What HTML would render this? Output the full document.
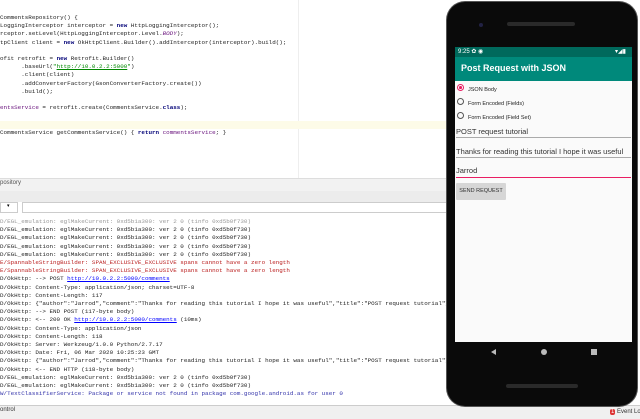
<html><head><style>
body{margin:0;width:640px;height:418px;background:#fff;position:relative;overflow:hidden;font-family:"Liberation Mono",monospace}
.c{position:absolute;font-size:5.9px;color:#222;white-space:pre;line-height:8.2px}
.s{font-family:"Liberation Sans",sans-serif}
</style></head><body>
<div style="position:absolute;left:298px;top:0;width:1px;height:178px;background:#eee"></div>
<div style="position:absolute;left:0;top:121px;width:447px;height:8px;background:#fdfbe8"></div>
<div class="c" style="left:0;top:14px">CommentsRepository() {
LoggingInterceptor interceptor = <b style="color:#007">new</b> HttpLoggingInterceptor();
rceptor.setLevel(HttpLoggingInterceptor.Level.<i style="color:#660e7a">BODY</i>);
tpClient client = <b style="color:#007">new</b> OkHttpClient.Builder().addInterceptor(interceptor).build();

ofit retrofit = <b style="color:#007">new</b> Retrofit.Builder()
      .baseUrl(<span style="color:#080">"<u>http://10.0.2.2:5000</u>"</span>)
      .client(client)
      .addConverterFactory(GsonConverterFactory.create())
      .build();

<span style="color:#660e7a">entsService</span> = retrofit.create(CommentsService.<b style="color:#007">class</b>);


CommentsService getCommentsService() { <b style="color:#007">return</b> <span style="color:#660e7a">commentsService</span>; }</div>
<div style="position:absolute;left:0;top:178px;width:447px;height:12px;background:#f2f2f2;border-top:1px solid #ddd;border-bottom:1px solid #ddd"></div>
<div class="s" style="position:absolute;left:0;top:180px;font-size:6px;color:#555">pository</div>
<div style="position:absolute;left:0;top:191px;width:447px;height:11px;background:#ececec"></div>
<div style="position:absolute;left:0;top:202px;width:16px;height:9px;border:1px solid #ccc;background:#fff;font-size:5px">&nbsp;&nbsp;▾</div>
<div style="position:absolute;left:22px;top:202px;width:425px;height:9px;border:1px solid #ccc;background:#fff"></div>
<div class="c" style="left:0;top:218px;line-height:8.2px"><span style="color:#999">D/EGL_emulation: eglMakeCurrent: 0xd5b1a300: ver 2 0 (tinfo 0xd5b0f730)</span>
D/EGL_emulation: eglMakeCurrent: 0xd5b1a300: ver 2 0 (tinfo 0xd5b0f730)
D/EGL_emulation: eglMakeCurrent: 0xd5b1a300: ver 2 0 (tinfo 0xd5b0f730)
D/EGL_emulation: eglMakeCurrent: 0xd5b1a300: ver 2 0 (tinfo 0xd5b0f730)
D/EGL_emulation: eglMakeCurrent: 0xd5b1a300: ver 2 0 (tinfo 0xd5b0f730)
<span style="color:#b22">E/SpannableStringBuilder: SPAN_EXCLUSIVE_EXCLUSIVE spans cannot have a zero length
E/SpannableStringBuilder: SPAN_EXCLUSIVE_EXCLUSIVE spans cannot have a zero length</span>
D/OkHttp: --&gt; POST <u style="color:#00f">http://10.0.2.2:5000/comments</u>
D/OkHttp: Content-Type: application/json; charset=UTF-8
D/OkHttp: Content-Length: 117
D/OkHttp: {"author":"Jarrod","comment":"Thanks for reading this tutorial I hope it was useful","title":"POST request tutorial"}
D/OkHttp: --&gt; END POST (117-byte body)
D/OkHttp: &lt;-- 200 OK <u style="color:#00f">http://10.0.2.2:5000/comments</u> (10ms)
D/OkHttp: Content-Type: application/json
D/OkHttp: Content-Length: 118
D/OkHttp: Server: Werkzeug/1.0.0 Python/2.7.17
D/OkHttp: Date: Fri, 06 Mar 2020 10:25:23 GMT
D/OkHttp: {"author":"Jarrod","comment":"Thanks for reading this tutorial I hope it was useful","title":"POST request tutorial"}
D/OkHttp: &lt;-- END HTTP (118-byte body)
D/EGL_emulation: eglMakeCurrent: 0xd5b1a300: ver 2 0 (tinfo 0xd5b0f730)
D/EGL_emulation: eglMakeCurrent: 0xd5b1a300: ver 2 0 (tinfo 0xd5b0f730)
<span style="color:#33a">W/TextClassifierService: Package or service not found in package com.google.android.as for user 0</span></div>
<div style="position:absolute;left:0;top:405px;width:640px;height:13px;background:#f0f0f0;border-top:1px solid #ccc"></div>
<div class="s" style="position:absolute;left:0;top:407px;font-size:6px;color:#333">ontrol</div>
<div class="s" style="position:absolute;left:610px;top:409px;font-size:6px;color:#333;white-space:nowrap"><span style="background:#d33;color:#fff;border-radius:2px;padding:0 1px">1</span> Event Log</div>
<!-- phone -->
<div style="position:absolute;left:447px;top:2px;width:190px;height:404px;background:#0a0a0a;border-radius:18px;box-shadow:0 0 0 1px #555"></div>
<div style="position:absolute;left:507px;top:22px;width:68px;height:4px;background:#2a2a2a;border-radius:2px"></div>
<div style="position:absolute;left:479px;top:23px;width:4px;height:4px;background:#224;border-radius:50%"></div>
<div style="position:absolute;left:506px;top:384px;width:72px;height:4px;background:#2a2a2a;border-radius:2px"></div>
<div style="position:absolute;left:455px;top:47px;width:177px;height:10px;background:#00695c"></div>
<div class="s" style="position:absolute;left:458px;top:48px;font-size:6px;color:#fff">9:25 ✿ ◉</div>
<div class="s" style="position:absolute;left:615px;top:48px;font-size:6px;color:#fff">▾◢▮</div>
<div style="position:absolute;left:455px;top:57px;width:177px;height:24px;background:#00897b"></div>
<div class="s" style="position:absolute;left:461px;top:63px;font-size:9px;color:#fff;font-weight:bold">Post Request with JSON</div>
<div style="position:absolute;left:455px;top:81px;width:177px;height:261px;background:#fafafa"></div>
<div style="position:absolute;left:457px;top:84px;width:5px;height:5px;border:1.2px solid #e91e63;border-radius:50%"><div style="margin:1.2px;width:2.6px;height:2.6px;background:#e91e63;border-radius:50%"></div></div>
<div style="position:absolute;left:457px;top:98px;width:5px;height:5px;border:1.2px solid #555;border-radius:50%"></div>
<div style="position:absolute;left:457px;top:112px;width:5px;height:5px;border:1.2px solid #555;border-radius:50%"></div>
<div class="s" style="position:absolute;left:468px;top:83px;font-size:5.5px;color:#222;line-height:14px">JSON Body<br>Form Encoded (Fields)<br>Form Encoded (Field Set)</div>
<div class="s" style="position:absolute;left:456px;top:127px;font-size:7.5px;color:#333">POST request tutorial</div>
<div style="position:absolute;left:456px;top:137px;width:175px;height:1px;background:#aaa"></div>
<div class="s" style="position:absolute;left:456px;top:147px;font-size:7.5px;color:#333;white-space:nowrap">Thanks for reading this tutorial I hope it was useful</div>
<div style="position:absolute;left:456px;top:157px;width:175px;height:1px;background:#aaa"></div>
<div class="s" style="position:absolute;left:456px;top:166px;font-size:7.5px;color:#333">Jarrod</div>
<div style="position:absolute;left:456px;top:177px;width:175px;height:1px;background:#e91e63"></div>
<div class="s" style="position:absolute;left:456px;top:183px;width:50px;height:17px;background:#d6d6d6;font-size:5.5px;line-height:17px;text-align:center;color:#333;border-radius:1px">SEND REQUEST</div>
<div style="position:absolute;left:491px;top:349px;width:0;height:0;border-top:3px solid transparent;border-bottom:3px solid transparent;border-right:5px solid #bbb"></div>
<div style="position:absolute;left:541px;top:349px;width:6px;height:6px;background:#bbb;border-radius:50%"></div>
<div style="position:absolute;left:591px;top:349px;width:6px;height:6px;background:#bbb"></div>
</body></html>
